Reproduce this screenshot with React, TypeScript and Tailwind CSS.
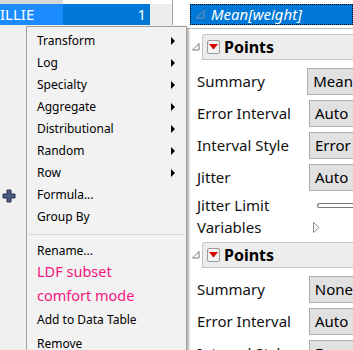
import { ReactNode } from 'react'

const menuFont = { fontFamily: '"Noto Sans", "Open Sans", sans-serif' }

type MenuItem = {
  label: string
  sub?: boolean
  pink?: boolean
  h: string
  icon?: ReactNode
}

function PlusIcon() {
  return (
    <svg width="14" height="14" viewBox="0 0 14 14">
      <path
        d="M5 1h4v4h4v4h-4v4h-4v-4h-4v-4h4z"
        fill="#4a5a82"
        stroke="#2a3350"
        strokeWidth="1"
      />
    </svg>
  )
}

function SubArrow() {
  return (
    <svg width="5" height="8" viewBox="0 0 5 8" className="absolute right-[10px]">
      <path d="M0 0 L4 4 L0 8 Z" fill="#000" />
    </svg>
  )
}

const topItems: MenuItem[] = [
  { label: 'Transform', sub: true, h: 'h-[22px]' },
  { label: 'Log', sub: true, h: 'h-[22px]' },
  { label: 'Specialty', sub: true, h: 'h-[22px]' },
  { label: 'Aggregate', sub: true, h: 'h-[22px]' },
  { label: 'Distributional', sub: true, h: 'h-[22px]' },
  { label: 'Random', sub: true, h: 'h-[22px]' },
  { label: 'Row', sub: true, h: 'h-[22px]' },
  { label: 'Formula...', h: 'h-[22px]' },
  { label: 'Group By', h: 'h-[22px]' },
]

const bottomItems: MenuItem[] = [
  { label: 'Rename...', h: 'h-[21px]' },
  { label: 'LDF subset', pink: true, h: 'h-[21px]' },
  { label: 'comfort mode', pink: true, h: 'h-[27px]' },
  { label: 'Add to Data Table', h: 'h-[22px]' },
  { label: 'Remove', h: 'h-[26px]' },
]

function MenuRow({ item }: { item: MenuItem }) {
  return (
    <div className={`relative flex items-center pl-[10px] ${item.h}`}>
      <span
        className={item.pink ? 'text-[14.5px] text-[#f5157d]' : 'text-[12px] text-black'}
        style={menuFont}
      >
        {item.label}
      </span>
      {item.sub && <SubArrow />}
    </div>
  )
}

function DisclosureTri() {
  return (
    <svg width="8" height="8" viewBox="0 0 8 8">
      <path d="M7 0.5 L7 7 L0.5 7 Z" fill="none" stroke="#777" strokeWidth="1" />
    </svg>
  )
}

function PointsHeader() {
  return (
    <div className="flex h-[26px] items-center">
      <div className="flex w-[16px] justify-center pl-[4px]">
        <DisclosureTri />
      </div>
      <div className="flex h-full flex-1 items-center gap-[4px] rounded-tl-[3px] border border-r-0 border-[#c6c6c6] bg-[#ececec] pl-[4px]">
        <div className="flex h-[14px] w-[13px] items-center justify-center rounded-[2px] border border-[#9a9a9a] bg-[#f4f4f4]">
          <svg width="9" height="6" viewBox="0 0 9 6">
            <path d="M0 0 L9 0 L4.5 5.5 Z" fill="#d40000" />
          </svg>
        </div>
        <span className="text-[16px] font-bold text-black" style={menuFont}>
          Points
        </span>
      </div>
    </div>
  )
}

function OptionRow({ label, value, first }: { label: string; value: string; first?: boolean }) {
  return (
    <div className={`flex h-[27px] items-center ${first ? 'mt-[8px]' : 'mt-[5px]'}`}>
      <span className="w-[123px] pl-[11px] text-[15px] text-[#111]" style={menuFont}>
        {label}
      </span>
      <div className="flex h-full flex-1 items-center border border-r-0 border-[#adadad] bg-[#e1e1e1] pl-[5px]">
        <span className="whitespace-nowrap text-[15px] text-black" style={menuFont}>
          {value}
        </span>
      </div>
    </div>
  )
}

export default function App() {
  return (
    <div className="relative flex h-[350px] w-[353px] overflow-hidden bg-white">
      {/* left list */}
      <div className="flex w-[186px] shrink-0 flex-col bg-[#f0f0f0]">
        <div className="flex h-[4px] shrink-0">
          <div className="w-[63px] bg-[#d9d9d9]" />
          <div className="w-[109px] bg-white" />
          <div className="w-[1px] bg-[#a0a0a0]" />
          <div className="flex-1 bg-white" />
        </div>
        <div className="flex h-[21px] shrink-0">
          <div className="flex w-[63px] items-center bg-[#1a8cff]">
            <span className="text-[15px] text-white" style={menuFont}>
              ILLIE
            </span>
          </div>
          <div className="flex w-[87px] items-center justify-end bg-[#0078d7] pr-[4px]">
            <span className="text-[15px] text-white" style={menuFont}>
              1
            </span>
          </div>
          <div className="w-[22px] bg-[#ececec]" />
          <div className="w-[1px] bg-[#a0a0a0]" />
          <div className="flex-1 bg-white" />
        </div>
        <div className="flex-1 bg-[#f0f0f0]" />
      </div>

      {/* right report */}
      <div className="min-w-0 flex-1 overflow-hidden bg-white">
        <div className="h-[4px]" />
        <div className="ml-[4px] flex h-[21px] items-center gap-[6px] border border-dotted border-black bg-[#0078d7] pl-[5px]">
          <svg width="9" height="9" viewBox="0 0 9 9">
            <path d="M8 0.5 L8 8 L0.5 8 Z" fill="none" stroke="#7d8ca8" strokeWidth="1" />
          </svg>
          <span className="text-[15px] italic text-white" style={menuFont}>
            Mean[weight]
          </span>
        </div>
        <div className="h-[3px]" />
        <div className="h-[1px] bg-[#c4c4c4]" />
        <div className="h-[5px]" />
        <PointsHeader />
        <OptionRow label="Summary" value="Mean" first />
        <OptionRow label="Error Interval" value="Auto" />
        <OptionRow label="Interval Style" value="Error" />
        <OptionRow label="Jitter" value="Auto" />
        <div className="mt-[3px] flex h-[22px] items-center">
          <span className="w-[131px] pl-[11px] text-[15px] text-[#111]" style={menuFont}>
            Jitter Limit
          </span>
          <div className="h-[5px] flex-1 rounded-l-full border border-r-0 border-[#7a7a7a] bg-white" />
        </div>
        <div className="flex h-[22px] items-center">
          <span className="w-[127px] pl-[11px] text-[15px] text-[#111]" style={menuFont}>
            Variables
          </span>
          <svg width="7" height="11" viewBox="0 0 7 11">
            <path d="M0.5 0.5 L6 5.5 L0.5 10.5 Z" fill="none" stroke="#8a8a8a" strokeWidth="1" />
          </svg>
        </div>
        <div className="h-[4px]" />
        <PointsHeader />
        <OptionRow label="Summary" value="None" first />
        <OptionRow label="Error Interval" value="Auto" />
        <OptionRow label="Interval Style" value="Error" />
      </div>

      {/* plus icon beside menu */}
      <div className="absolute left-[2px] top-[189px]">
        <PlusIcon />
      </div>

      {/* context menu overlay */}
      <div className="absolute left-[26px] top-[26px] w-[161px] border border-[#a0a0a0] bg-[#f2f2f2] shadow-[2px_2px_2px_rgba(0,0,0,0.3)]">
        <div className="pt-[3px]">
          {topItems.map((item) => (
            <MenuRow key={item.label} item={item} />
          ))}
          <div className="flex h-[12px] items-center px-[2px]">
            <div className="h-[1px] w-full bg-[#d7d7d7]" />
          </div>
          {bottomItems.map((item) => (
            <MenuRow key={item.label} item={item} />
          ))}
        </div>
      </div>
    </div>
  )
}
